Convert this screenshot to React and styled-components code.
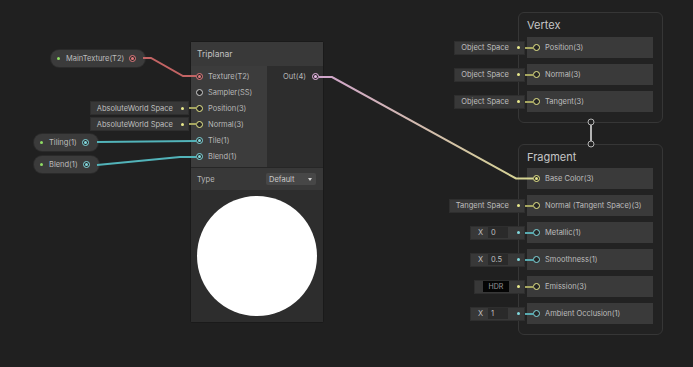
import React from "react";
import styled, { createGlobalStyle } from "styled-components";

const GlobalStyle = createGlobalStyle`
  html, body {
    margin: 0;
    padding: 0;
    background: #202020;
  }
  body {
    font-family: Inter, "Noto Sans", sans-serif;
  }
`;

const colors = {
  texture: "#e27b7e",
  sampler: "#cfcfcf",
  vec3: "#e9e98c",
  vec1: "#82d9de",
  vec4: "#eab9e6",
  exposed: "#8fdc63",
};

const wires = {
  vec3: "#a6a660",
  vec1: "#58aab0",
};

const Canvas = styled.div`
  position: relative;
  width: 693px;
  height: 367px;
  overflow: hidden;
  background: #202020;
`;

const Wires = styled.svg`
  position: absolute;
  left: 0;
  top: 0;
  pointer-events: none;
`;

/* ---------- ports & inline value stubs ---------- */

const PortRing = styled.span`
  position: relative;
  flex-shrink: 0;
  box-sizing: border-box;
  width: 7px;
  height: 7px;
  border-radius: 50%;
  border: 1px solid ${(p) => p.$color};
  background: #262626;

  &::after {
    content: "";
    display: ${(p) => (p.$connected ? "block" : "none")};
    position: absolute;
    inset: 1px;
    border-radius: 50%;
    background: ${(p) => p.$color};
  }
`;

const Stub = styled.span`
  position: absolute;
  right: 100%;
  top: 50%;
  transform: translateY(-50%);
  display: flex;
  align-items: center;
`;

const StubBox = styled.span`
  display: flex;
  align-items: center;
  box-sizing: border-box;
  height: 14px;
  padding: 0 4px 0 ${(p) => p.$padLeft ?? 6}px;
  background: #383838;
  border: 1px solid #2e2e2e;
  font-size: 7.5px;
  color: #bfbfbf;
  white-space: nowrap;
`;

const StubDot = styled.span`
  width: 3px;
  height: 3px;
  margin-left: ${(p) => p.$gap ?? 8}px;
  border-radius: 50%;
  background: ${(p) => p.$color};
`;

const StubWire = styled.span`
  width: ${(p) => p.$len}px;
  height: 2px;
  background: ${(p) => p.$color};
`;

const FloatLabel = styled.span`
  margin-right: 5px;
`;

const FloatField = styled.span`
  display: flex;
  align-items: center;
  width: 20px;
  height: 11px;
  padding-left: 3px;
  box-sizing: border-box;
  background: #2a2a2a;
`;

const HdrField = styled.span`
  display: flex;
  align-items: center;
  justify-content: center;
  width: 26px;
  height: 11px;
  background: #050505;
  color: #9a9a9a;
  font-size: 7px;
`;

const Port = ({ color, connected, stub }) => (
  <PortRing $color={color} $connected={connected}>
    {stub}
  </PortRing>
);

const TextStub = ({ text, type, wire = 9 }) => (
  <Stub>
    <StubBox>
      {text}
      <StubDot $color={colors[type]} />
    </StubBox>
    <StubWire $len={wire} $color={wires[type]} />
  </Stub>
);

const FloatStub = ({ value }) => (
  <Stub>
    <StubBox $padLeft={7}>
      <FloatLabel>X</FloatLabel>
      <FloatField>{value}</FloatField>
      <StubDot $color={colors.vec1} $gap={9} />
    </StubBox>
    <StubWire $len={9} $color={wires.vec1} />
  </Stub>
);

const HdrStub = () => (
  <Stub>
    <StubBox $padLeft={8}>
      <HdrField>HDR</HdrField>
      <StubDot $color={colors.vec3} $gap={8} />
    </StubBox>
    <StubWire $len={9} $color={wires.vec3} />
  </Stub>
);

/* ---------- property pills ---------- */

const Pill = styled.div`
  position: absolute;
  left: ${(p) => p.$x}px;
  top: ${(p) => p.$y}px;
  display: flex;
  align-items: center;
  height: 17px;
  padding: 0 9px 0 6px;
  border-radius: 8px;
  background: #3b3b3b;
  box-shadow: 0 0 0 1px #2a2a2a;
  font-size: 7.5px;
  color: #bdbdbd;
  white-space: nowrap;
`;

const ExposedDot = styled.span`
  width: 3px;
  height: 3px;
  margin-right: 6px;
  border-radius: 50%;
  background: ${colors.exposed};
`;

const PillLabel = styled.span`
  margin-right: 5px;
`;

const Property = ({ x, y, name, type }) => (
  <Pill $x={x} $y={y}>
    <ExposedDot />
    <PillLabel>{name}</PillLabel>
    <Port color={colors[type]} connected />
  </Pill>
);

/* ---------- triplanar node ---------- */

const Node = styled.div`
  position: absolute;
  left: ${(p) => p.$x}px;
  top: ${(p) => p.$y}px;
  width: ${(p) => p.$w}px;
  display: flex;
  flex-direction: column;
  background: #2e2e2e;
  box-shadow: 0 0 0 1px #1a1a1a;
  border-radius: 2px;
`;

const NodeHeader = styled.div`
  display: flex;
  align-items: center;
  height: 24px;
  padding-left: 6px;
  background: #393939;
  font-size: 8.5px;
  color: #c4c4c4;
`;

const PortSection = styled.div`
  display: grid;
  grid-template-columns: 76px 1fr;
  height: 101px;
  border-bottom: 1px solid #262626;
`;

const Inputs = styled.div`
  display: flex;
  flex-direction: column;
  padding-top: 2px;
  background: #3c3c3c;
`;

const Outputs = styled.div`
  display: flex;
  flex-direction: column;
  padding-top: 2px;
  background: #2d2d2d;
`;

const InRow = styled.div`
  display: flex;
  align-items: center;
  gap: 5px;
  height: 16px;
  padding-left: 5px;
  font-size: 7.5px;
  color: #b8b8b8;
  white-space: nowrap;
`;

const OutRow = styled(InRow)`
  justify-content: flex-end;
  padding: 0 4px 0 0;
  gap: 6px;
`;

const SettingRow = styled.div`
  display: flex;
  align-items: center;
  justify-content: space-between;
  height: 22px;
  padding: 0 7px 0 6px;
  background: #383838;
  font-size: 7.5px;
  color: #b8b8b8;
`;

const Dropdown = styled.div`
  display: flex;
  align-items: center;
  justify-content: space-between;
  box-sizing: border-box;
  width: 50px;
  height: 12px;
  padding: 0 4px 0 3px;
  border-radius: 2px;
  background: #474747;
  color: #cacaca;
  font-size: 7.5px;
`;

const Caret = styled.span`
  width: 0;
  height: 0;
  border-left: 2.5px solid transparent;
  border-right: 2.5px solid transparent;
  border-top: 3px solid #cfcfcf;
`;

const Preview = styled.div`
  display: flex;
  align-items: center;
  justify-content: center;
  height: 132px;
  background: #2d2d2d;
`;

const Sphere = styled.div`
  width: 120px;
  height: 120px;
  border-radius: 50%;
  background: #ffffff;
`;

const triplanarInputs = [
  { label: "Texture(T2)", type: "texture", connected: true },
  { label: "Sampler(SS)", type: "sampler" },
  { label: "Position(3)", type: "vec3", stub: "AbsoluteWorld Space" },
  { label: "Normal(3)", type: "vec3", stub: "AbsoluteWorld Space" },
  { label: "Tile(1)", type: "vec1", connected: true },
  { label: "Blend(1)", type: "vec1", connected: true },
];

const Triplanar = () => (
  <Node $x={191} $y={42} $w={132}>
    <NodeHeader>Triplanar</NodeHeader>
    <PortSection>
      <Inputs>
        {triplanarInputs.map((input) => (
          <InRow key={input.label}>
            <Port
              color={colors[input.type]}
              connected={input.connected}
              stub={
                input.stub && (
                  <TextStub text={input.stub} type={input.type} wire={8} />
                )
              }
            />
            {input.label}
          </InRow>
        ))}
      </Inputs>
      <Outputs>
        <OutRow>
          Out(4)
          <Port color={colors.vec4} connected />
        </OutRow>
      </Outputs>
    </PortSection>
    <SettingRow>
      Type
      <Dropdown>
        Default
        <Caret />
      </Dropdown>
    </SettingRow>
    <Preview>
      <Sphere />
    </Preview>
  </Node>
);

/* ---------- master stack contexts ---------- */

const Context = styled.div`
  position: absolute;
  left: 518px;
  top: ${(p) => p.$y}px;
  width: 145px;
  box-sizing: border-box;
  padding: 0 9px 10px 8px;
  border: 1px solid #363636;
  border-radius: 6px;
  background: #222222;
`;

const ContextTitle = styled.div`
  display: flex;
  align-items: center;
  height: ${(p) => p.$h}px;
  font-size: 11px;
  color: #c6c6c6;
`;

const BlockList = styled.div`
  display: flex;
  flex-direction: column;
  gap: 6px;
`;

const Block = styled.div`
  display: flex;
  align-items: center;
  gap: 5px;
  height: 21px;
  padding-left: 6px;
  background: #3a3a3a;
  font-size: 7.5px;
  color: #bdbdbd;
  white-space: nowrap;
`;

const vertexBlocks = [
  { label: "Position(3)", type: "vec3", stub: <TextStub text="Object Space" type="vec3" /> },
  { label: "Normal(3)", type: "vec3", stub: <TextStub text="Object Space" type="vec3" /> },
  { label: "Tangent(3)", type: "vec3", stub: <TextStub text="Object Space" type="vec3" /> },
];

const fragmentBlocks = [
  { label: "Base Color(3)", type: "vec3", connected: true },
  { label: "Normal (Tangent Space)(3)", type: "vec3", stub: <TextStub text="Tangent Space" type="vec3" /> },
  { label: "Metallic(1)", type: "vec1", stub: <FloatStub value="0" /> },
  { label: "Smoothness(1)", type: "vec1", stub: <FloatStub value="0.5" /> },
  { label: "Emission(3)", type: "vec3", stub: <HdrStub /> },
  { label: "Ambient Occlusion(1)", type: "vec1", stub: <FloatStub value="1" /> },
];

const MasterContext = ({ title, y, titleHeight, blocks }) => (
  <Context $y={y}>
    <ContextTitle $h={titleHeight}>{title}</ContextTitle>
    <BlockList>
      {blocks.map((block) => (
        <Block key={block.label}>
          <Port
            color={colors[block.type]}
            connected={block.connected}
            stub={block.stub}
          />
          {block.label}
        </Block>
      ))}
    </BlockList>
  </Context>
);

/* ---------- edges ---------- */

const Edges = () => (
  <Wires width="693" height="367" viewBox="0 0 693 367">
    <defs>
      <linearGradient id="outToBase" x1="318" y1="0" x2="533" y2="0" gradientUnits="userSpaceOnUse">
        <stop offset="0" stopColor="#cfa3cb" />
        <stop offset="1" stopColor="#d6d690" />
      </linearGradient>
    </defs>
    <polyline points="143,58 151,58 183,76 196,76" fill="none" stroke="#c36464" strokeWidth="2" />
    <polyline points="97,142 196,141" fill="none" stroke="#52b3b9" strokeWidth="2" />
    <polyline points="97,165 180,157 196,157" fill="none" stroke="#52b3b9" strokeWidth="2" />
    <polyline points="319,77 332,77 516,178.5 533,178.5" fill="none" stroke="url(#outToBase)" strokeWidth="2" />
    <line x1="591" y1="125" x2="591" y2="141" stroke="#b4b4b4" strokeWidth="2" />
    <circle cx="591" cy="122" r="3" fill="#222" stroke="#b4b4b4" strokeWidth="1" />
    <circle cx="591" cy="144" r="3" fill="#222" stroke="#b4b4b4" strokeWidth="1" />
  </Wires>
);

export default function App() {
  return (
    <>
      <GlobalStyle />
      <Canvas>
        <Property x={51} y={50} name="MainTexture(T2)" type="texture" />
        <Property x={34} y={134} name="Tiling(1)" type="vec1" />
        <Property x={34} y={156} name="Blend(1)" type="vec1" />
        <Triplanar />
        <MasterContext title="Vertex" y={12} titleHeight={24} blocks={vertexBlocks} />
        <MasterContext title="Fragment" y={144} titleHeight={23} blocks={fragmentBlocks} />
        <Edges />
      </Canvas>
    </>
  );
}
